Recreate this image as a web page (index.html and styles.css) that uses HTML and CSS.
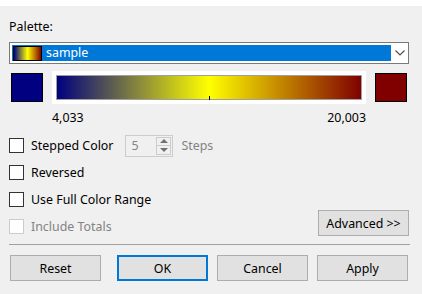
FILE: index.html
```html
<!DOCTYPE html>
<html lang="en">
<head>
    <meta charset="UTF-8">
    <title>Palette</title>
    <link rel="stylesheet" href="styles.css">
</head>
<body>
<div class="strip"></div>
<div class="dialog">
    <div class="label">Palette:</div>
    <div class="combo">
        <div class="combo-sel">
            <span class="mini-ramp"></span>
            <span>sample</span>
        </div>
        <div class="combo-arrow">
            <svg width="10" height="6" viewBox="0 0 10 6"><polyline points="0.5,0.5 5,5 9.5,0.5" fill="none" stroke="#505050" stroke-width="1.2"/></svg>
        </div>
    </div>
    <div class="ramp">
        <div class="swatch low"></div>
        <div class="bar"><div class="grad"><span class="tick"></span></div></div>
        <div class="swatch high"></div>
    </div>
    <div class="range">
        <span>4,033</span>
        <span>20,003</span>
    </div>
    <div class="opt first">
        <span class="check"></span>
        <span>Stepped Color</span>
        <div class="spin">
            <span class="spin-val">5</span>
            <div class="spin-btns">
                <span class="up"><svg width="8" height="4" viewBox="0 0 8 4"><polygon points="4,0 8,4 0,4" fill="#707070"/></svg></span>
                <span class="down"><svg width="8" height="4" viewBox="0 0 8 4"><polygon points="0,0 8,0 4,4" fill="#707070"/></svg></span>
            </div>
        </div>
        <span class="dim steps">Steps</span>
    </div>
    <div class="opt">
        <span class="check"></span>
        <span>Reversed</span>
    </div>
    <div class="opt">
        <span class="check"></span>
        <span>Use Full Color Range</span>
    </div>
    <div class="opt">
        <span class="check off"></span>
        <span class="dim">Include Totals</span>
        <button class="btn adv">Advanced &gt;&gt;</button>
    </div>
    <div class="sep"></div>
    <div class="buttons">
        <button class="btn reset">Reset</button>
        <button class="btn ok">OK</button>
        <button class="btn">Cancel</button>
        <button class="btn">Apply</button>
    </div>
</div>
</body>
</html>
```

FILE: styles.css
```css
body{margin:0;background:#f0f0f0;font:12.4px/16px "Noto Sans",sans-serif;color:#000;}
.strip{height:6px;background:#fff;}
.dialog{padding:13px 13px 0 9px;}
.label{height:16px;}

.combo{
    margin-top:7px;
    width:400px;
    height:22px;
    box-sizing:border-box;
    border:1px solid #7a7a7a;
    background:#fff;
    padding:2px 0 2px 2px;
    display:flex;
}
.combo-sel{
    flex:1;
    background:#0078d7;
    color:#fff;
    display:flex;
    align-items:center;
    gap:4px;
    padding-left:1px;
}
.mini-ramp{
    width:29px;
    height:15px;
    box-sizing:border-box;
    border:1px solid #000;
    background:linear-gradient(to right,#000080,#ffff00,#800000);
}
.combo-arrow{
    width:17px;
    display:flex;
    align-items:center;
    justify-content:center;
}

.ramp{margin-top:7px;display:flex;align-items:center;gap:9px;padding-left:2px;}
.swatch{width:32px;height:29px;box-sizing:border-box;border:1px solid #000;}
.low{background:#000080;}
.high{background:#800000;}
.bar{width:314px;height:33px;box-sizing:border-box;padding:4px;background:#fff;}
.grad{
    height:25px;
    box-sizing:border-box;
    border:1px solid #a0a0a0;
    background:linear-gradient(to right,#000080,#ffff00,#800000);
    position:relative;
}
.tick{position:absolute;left:50%;bottom:-1px;width:1px;height:4px;background:#000;}

.range{margin-top:6px;margin-left:43px;width:314px;display:flex;justify-content:space-between;}

.opt{height:27px;display:flex;align-items:center;}
.opt.first{margin-top:6px;}
.check{
    width:15px;
    height:15px;
    box-sizing:border-box;
    border:1px solid #333;
    background:#fff;
    margin-right:7px;
}
.check.off{border-color:#ccc;}
.dim{color:#838383;}

.spin{
    margin-left:12px;
    width:48px;
    height:22px;
    box-sizing:border-box;
    border:1px solid #ccc;
    display:flex;
}
.spin-val{flex:1;color:#838383;padding-left:5px;line-height:20px;}
.spin-btns{width:15px;display:flex;flex-direction:column;padding:1px 1px 1px 0;}
.spin-btns span{
    flex:1;
    display:flex;
    align-items:center;
    justify-content:center;
    background:#f0f0f0;
    border:1px solid #ccc;
}
.spin-btns .down{border-top:none;}
.steps{margin-left:8px;}

.btn{
    width:91px;
    height:26px;
    box-sizing:border-box;
    border:1px solid #adadad;
    background:#e1e1e1;
    font:12.4px "Noto Sans",sans-serif;
    color:#000;
    padding:0;
}
.adv{margin-left:auto;margin-top:-7px;}
.sep{margin-top:4px;width:401px;height:1px;background:#a0a0a0;}
.buttons{margin-top:10px;display:flex;gap:9px;}
.reset{margin-left:1px;margin-right:7px;}
.ok{border:2px solid #0078d7;}
```
